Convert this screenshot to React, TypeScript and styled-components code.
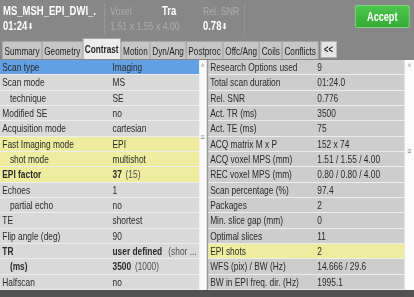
import React from "react";
import styled, { createGlobalStyle } from "styled-components";

// The console font is a narrow one; the whole screen is laid out on a wider
// canvas and squeezed horizontally to get the same condensed look.
const SQUEEZE = 0.76;
const CANVAS_W = Math.round(414 / SQUEEZE);

const GlobalStyle = createGlobalStyle`
  body {
    margin: 0;
    background: #878787;
  }
`;

type Cell = { text: string; bold?: boolean; note?: string };
type Row = { label: string; value: Cell; indent?: boolean; bold?: boolean; mark?: "blue" | "yellow" };

const leftRows: Row[] = [
  { label: "Scan type", value: { text: "Imaging" }, mark: "blue" },
  { label: "Scan mode", value: { text: "MS" } },
  { label: "technique", value: { text: "SE" }, indent: true },
  { label: "Modified SE", value: { text: "no" } },
  { label: "Acquisition mode", value: { text: "cartesian" } },
  { label: "Fast Imaging mode", value: { text: "EPI" }, mark: "yellow" },
  { label: "shot mode", value: { text: "multishot" }, indent: true, mark: "yellow" },
  { label: "EPI factor", value: { text: "37", bold: true, note: "(15)" }, bold: true, mark: "yellow" },
  { label: "Echoes", value: { text: "1" } },
  { label: "partial echo", value: { text: "no" }, indent: true },
  { label: "TE", value: { text: "shortest" } },
  { label: "Flip angle (deg)", value: { text: "90" } },
  { label: "TR", value: { text: "user defined", bold: true, note: " (shor ..." }, bold: true },
  { label: "(ms)", value: { text: "3500", bold: true, note: "(1000)" }, bold: true, indent: true },
  { label: "Halfscan", value: { text: "no" } },
];

const rightRows: Row[] = [
  { label: "Research Options used", value: { text: "9" } },
  { label: "Total scan duration", value: { text: "01:24.0" } },
  { label: "Rel. SNR", value: { text: "0.776" } },
  { label: "Act. TR (ms)", value: { text: "3500" } },
  { label: "Act. TE (ms)", value: { text: "75" } },
  { label: "ACQ matrix M x P", value: { text: "152 x 74" } },
  { label: "ACQ voxel MPS (mm)", value: { text: "1.51 / 1.55 / 4.00" } },
  { label: "REC voxel MPS (mm)", value: { text: "0.80 / 0.80 / 4.00" } },
  { label: "Scan percentage (%)", value: { text: "97.4" } },
  { label: "Packages", value: { text: "2" } },
  { label: "Min. slice gap (mm)", value: { text: "0" } },
  { label: "Optimal slices", value: { text: "11" } },
  { label: "EPI shots", value: { text: "2" }, mark: "yellow" },
  { label: "WFS (pix) / BW (Hz)", value: { text: "14.666 / 29.6" } },
  { label: "BW in EPI freq. dir. (Hz)", value: { text: "1995.1" } },
];

const tabs = ["Summary", "Geometry", "Contrast", "Motion", "Dyn/Ang", "Postproc", "Offc/Ang", "Coils", "Conflicts"];

const App = () => {
  return (
    <>
      <GlobalStyle />
      <Stage>
        <Canvas style={{ width: CANVAS_W, transform: `scaleX(${SQUEEZE})` }}>
          <Header>
            <InfoBlock $w={133}>
              <Strong>MS_MSH_EPI_DWI_.</Strong>
              <Strong>
                01:24<Arrow>⬇</Arrow>
              </Strong>
            </InfoBlock>
            <InfoBlock $w={130} $line>
              <InfoLine>
                <Faint>Voxel</Faint>
                <Strong>Tra</Strong>
              </InfoLine>
              <Faint>1.51 x 1.55 x 4.00</Faint>
            </InfoBlock>
            <InfoBlock $w={54}>
              <Faint>Rel. SNR</Faint>
              <Strong>
                0.78<Arrow>⬇</Arrow>
              </Strong>
            </InfoBlock>
            <Divider />
            <AcceptButton>Accept</AcceptButton>
          </Header>

          <TabBar>
            {tabs.map((t) => (
              <Tab key={t} $active={t === "Contrast"}>
                {t}
              </Tab>
            ))}
            <CollapseButton>&lt;&lt;</CollapseButton>
          </TabBar>

          <Panels>
            <Panel>
              <RowList $bg="#d9d9d9">
                {leftRows.map((r) => (
                  <ParamRow key={r.label} row={r} labelW={148} />
                ))}
              </RowList>
              <ScrollBar $w={10}>
                <ScrollArrow>^</ScrollArrow>
                <ScrollGrip $top={72}>≡</ScrollGrip>
              </ScrollBar>
            </Panel>
            <Panel>
              <RowList $bg="#cdcdcd">
                {rightRows.map((r) => (
                  <ParamRow key={r.label} row={r} labelW={144} />
                ))}
              </RowList>
              <ScrollBar $w={13}>
                <ScrollArrow>^</ScrollArrow>
                <ScrollGrip $top={86}>≡</ScrollGrip>
              </ScrollBar>
            </Panel>
          </Panels>
          <Footer />
        </Canvas>
      </Stage>
    </>
  );
};

const ParamRow = ({ row, labelW }: { row: Row; labelW: number }) => (
  <RowBox $mark={row.mark}>
    <Label $indent={row.indent} $bold={row.bold} $w={labelW}>
      {row.label}
    </Label>
    <Value>
      <ValueMain $bold={row.value.bold}>{row.value.text}</ValueMain>
      {row.value.note && <Note>{row.value.note}</Note>}
    </Value>
  </RowBox>
);

export default App;

const Stage = styled.div`
  width: 414px;
  height: 297px;
  overflow: hidden;
  background: #878787;
`;

const Canvas = styled.div`
  height: 297px;
  display: flex;
  flex-direction: column;
  transform-origin: 0 0;
  font-family: "Liberation Sans", Arial, sans-serif;
`;

const Header = styled.div`
  height: 38px;
  display: flex;
  align-items: flex-start;
  padding: 3px 6px 0 4px;
  box-sizing: border-box;
`;

const InfoBlock = styled.div<{ $w: number; $line?: boolean }>`
  width: ${(p) => p.$w}px;
  height: 31px;
  display: flex;
  flex-direction: column;
  gap: 1px;
  padding: 1px 0 0 ${(p) => (p.$line ? 7 : 0)}px;
  box-sizing: border-box;
  border-left: ${(p) => (p.$line ? "1px solid #9c9c9c" : "none")};
`;

const Divider = styled.div`
  width: 1px;
  height: 31px;
  background: #9c9c9c;
`;

const InfoLine = styled.div`
  display: flex;
  align-items: baseline;
  gap: 40px;
`;

const Strong = styled.span`
  color: #ffffff;
  font-size: 12.5px;
  font-weight: bold;
  line-height: 14px;
  white-space: nowrap;
`;

const Faint = styled.span`
  color: #acacac;
  font-size: 11.5px;
  line-height: 14px;
  white-space: nowrap;
`;

const Arrow = styled.span`
  font-size: 8px;
  margin-left: 1px;
  vertical-align: 1px;
`;

const AcceptButton = styled.button`
  margin-left: auto;
  margin-top: 2px;
  width: 72px;
  height: 23px;
  border: 1px solid #7ee07e;
  border-radius: 2px;
  background: linear-gradient(#4ec64e, #35ab35);
  color: #ffffff;
  font-family: "Liberation Sans", Arial, sans-serif;
  font-weight: bold;
  font-size: 12px;
  padding: 0;
`;

const TabBar = styled.div`
  height: 22px;
  display: flex;
  align-items: flex-end;
  padding: 0 0 1px 3px;
  box-sizing: border-box;
`;

const Tab = styled.div<{ $active?: boolean }>`
  height: ${(p) => (p.$active ? 21 : 18)}px;
  display: flex;
  align-items: center;
  padding: 0 2px;
  box-sizing: border-box;
  background: ${(p) => (p.$active ? "#ededed" : "#c6c6c6")};
  border: 1px solid #a6a6a6;
  border-bottom: none;
  color: #1e1e1e;
  font-size: 10.8px;
  font-weight: ${(p) => (p.$active ? "bold" : "normal")};
  white-space: nowrap;
`;

const CollapseButton = styled.div`
  margin: 0 0 1px 3px;
  height: 15px;
  width: 19px;
  display: flex;
  align-items: center;
  justify-content: center;
  background: #e6e6e6;
  border: 1px solid #b4b4b4;
  font-size: 10px;
  font-weight: bold;
  color: #222;
`;

const Panels = styled.div`
  display: flex;
  gap: 2px;
  height: 230px;
  background: #9a9a9a;
`;

const Panel = styled.div`
  flex: 1;
  display: flex;
`;

const RowList = styled.div<{ $bg: string }>`
  flex: 1;
  display: grid;
  grid-template-rows: repeat(15, 1fr);
  background: ${(p) => p.$bg};
`;

const RowBox = styled.div<{ $mark?: "blue" | "yellow" }>`
  display: flex;
  align-items: center;
  border-bottom: 1px solid #ededed;
  background: ${(p) =>
    p.$mark === "blue" ? "#62a0e3" : p.$mark === "yellow" ? "#eeed9f" : "transparent"};
  color: #2a2a2a;
  font-size: 11px;
  white-space: nowrap;
  overflow: hidden;
`;

const Label = styled.span<{ $indent?: boolean; $bold?: boolean; $w: number }>`
  width: ${(p) => p.$w}px;
  flex-shrink: 0;
  padding-left: ${(p) => (p.$indent ? 13 : 3)}px;
  box-sizing: border-box;
  font-weight: ${(p) => (p.$bold ? "bold" : "normal")};
  white-space: pre;
`;

const Value = styled.span`
  display: flex;
  gap: 5px;
  white-space: pre;
`;

const ValueMain = styled.span<{ $bold?: boolean }>`
  font-weight: ${(p) => (p.$bold ? "bold" : "normal")};
`;

const Note = styled.span`
  color: #505050;
`;

const ScrollBar = styled.div<{ $w: number }>`
  width: ${(p) => p.$w}px;
  position: relative;
  background: #fbfbfb;
`;

const ScrollArrow = styled.div`
  text-align: center;
  font-size: 9px;
  color: #8a8a8a;
  line-height: 10px;
  padding-top: 2px;
`;

const ScrollGrip = styled.div<{ $top: number }>`
  position: absolute;
  left: 0;
  right: 0;
  top: ${(p) => p.$top}px;
  text-align: center;
  font-size: 9px;
  color: #8a8a8a;
`;

const Footer = styled.div`
  flex: 1;
  background: #525252;
`;
